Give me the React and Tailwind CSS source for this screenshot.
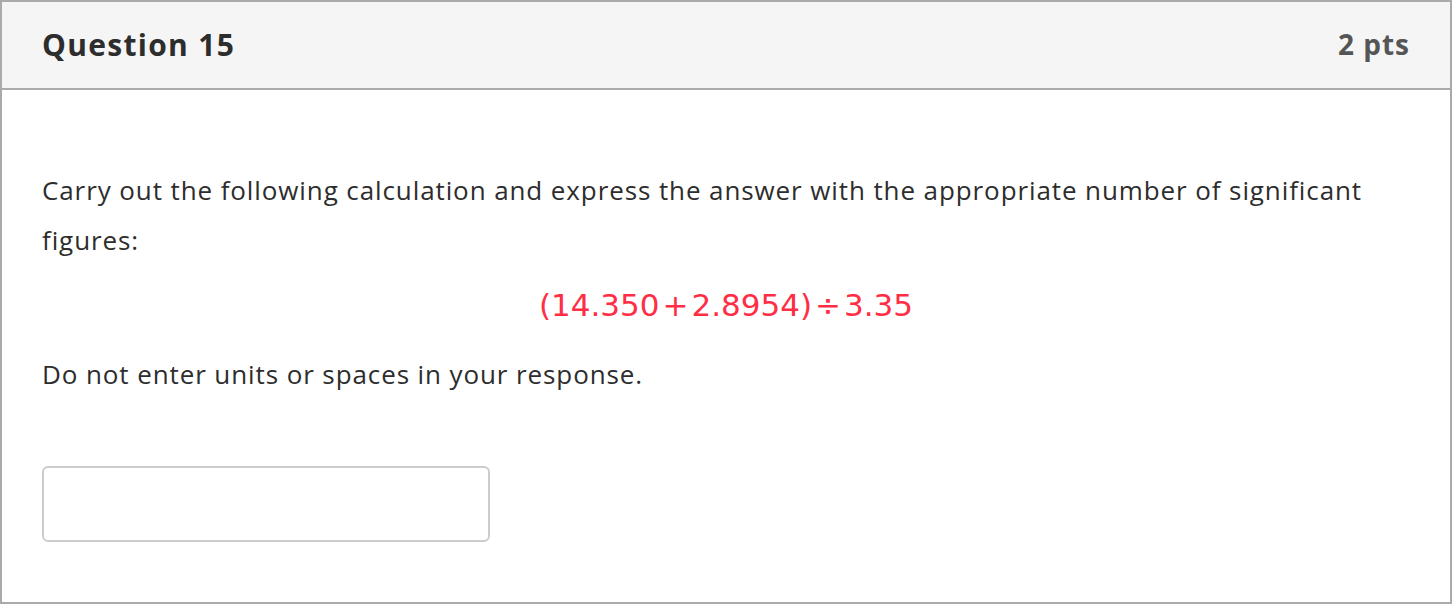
export default function App() {
  return (
    <div className="w-[1456px] h-[606px] bg-white" style={{ fontFamily: "'Open Sans', Lato, sans-serif" }}>
      <div className="w-[1452px] h-[604px] border-2 border-[#aaaaaa] flex flex-col">
        {/* Header */}
        <div className="h-[88px] shrink-0 bg-[#f5f5f5] border-b-2 border-[#aaaaaa] flex items-center justify-between pl-[40px] pr-[40px] pb-[2px]">
          <h2 className="text-[30px] font-bold text-[#2d2d2d] tracking-[1.3px]">Question 15</h2>
          <span className="text-[28px] font-bold text-[#555555] tracking-[1px]">2 pts</span>
        </div>

        {/* Body */}
        <div className="flex-1 px-[40px] pt-[75px] text-[#2d2d2d]">
          <p className="text-[26px] leading-[50px] tracking-[0.9px]">
            Carry out the following calculation and express the answer with the appropriate number of significant
            <br />
            figures:
          </p>
          <div
            className="text-center text-[#ff2e45] text-[31px] mt-[18px] leading-[44px]"
            style={{ fontFamily: "'DejaVu Sans', Verdana, sans-serif" }}
          >
            (14.350<span className="mx-[3px]">+</span>2.8954)<span className="mx-[3px]">÷</span>3.35
          </div>
          <p className="text-[26px] leading-[50px] mt-[22px] tracking-[0.9px]">Do not enter units or spaces in your response.</p>
          <input
            type="text"
            className="mt-[67px] w-[448px] h-[76px] border-2 border-[#cccccc] rounded-[6px] bg-white outline-none"
          />
        </div>
      </div>
    </div>
  );
}
